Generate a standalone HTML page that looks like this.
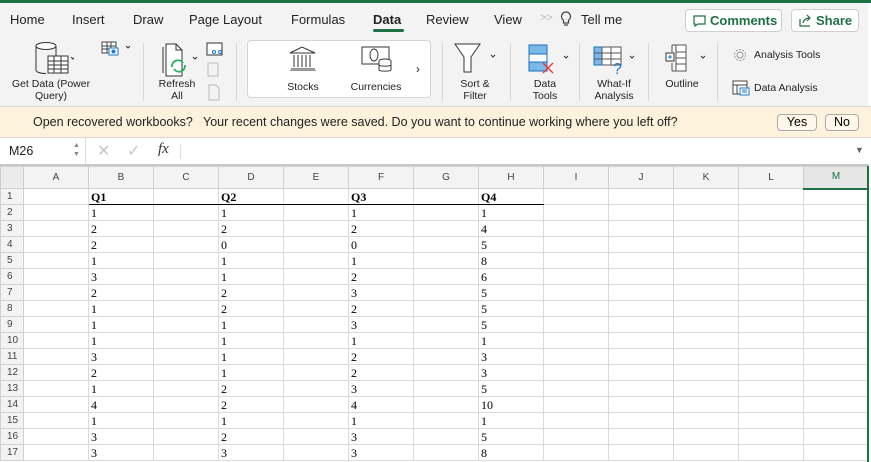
<!DOCTYPE html>
<html><head><meta charset="utf-8"><style>
*{box-sizing:border-box;margin:0;padding:0}
body{width:871px;height:462px;overflow:hidden;background:#fff;font-family:"Liberation Sans",sans-serif;position:relative}
.abs{position:absolute}
#top{left:0;top:0;width:871px;height:106px;background:#f3f3f3;border-top:3px solid #1e7145}
.tab{position:absolute;top:9px;font-size:13px;color:#222}
.lbl{position:absolute;font-size:10.5px;color:#222;text-align:center;line-height:12px}
.sep{position:absolute;top:40px;width:1px;height:58px;background:#d6d6d6}
.btn{position:absolute;top:6px;height:23px;border:1px solid #cfcfcf;border-radius:4px;background:#fff;color:#1e7145;font-weight:bold;font-size:13px;line-height:21px;padding-left:24px}
#banner{left:0;top:106px;width:871px;height:32px;background:#fdf3dc;border-top:1px solid #d8d8d8;border-bottom:1px solid #d8d8d8}
#fbar{left:0;top:138px;width:871px;height:28px;background:#fff;border-bottom:2px solid #c8c8c8}
table{position:absolute;left:0;top:166px;border-collapse:collapse;table-layout:fixed;width:868px}
td{height:16px;border:1px solid #dadada;font-family:"Liberation Serif",serif;font-size:12px;padding:0 2px;line-height:14px;overflow:hidden;white-space:nowrap;color:#000}
tr.h td{height:22px;background:#f3f3f3;font-family:"Liberation Sans",sans-serif;font-size:10px;color:#444;text-align:center;border-color:#d0d0d0}
td.r{background:#f3f3f3;font-family:"Liberation Sans",sans-serif;font-size:10px;color:#444;padding-left:6px;border-color:#d0d0d0}
tr.q td.d{font-weight:bold;border-bottom:1.5px solid #000}
</style></head><body>
<div id="top" class="abs">
 <div class="tab" style="left:10px">Home</div>
 <div class="tab" style="left:72px">Insert</div>
 <div class="tab" style="left:133px">Draw</div>
 <div class="tab" style="left:189px">Page Layout</div>
 <div class="tab" style="left:291px">Formulas</div>
 <div class="tab" style="left:373px;font-weight:bold">Data</div>
 <div class="abs" style="left:373px;top:26px;width:31px;height:3px;background:#1e7145;border-radius:2px"></div>
 <div class="tab" style="left:426px">Review</div>
 <div class="tab" style="left:494px">View</div>
 <div class="tab" style="left:540px;color:#bbb;font-size:11px">&gt;&gt;</div>
 <svg class="abs" style="left:560px;top:8px" width="12" height="16"><path d="M6 1a4.5 4.5 0 0 0-2.5 8.2V12h5V9.2A4.5 4.5 0 0 0 6 1zM4 14h4" fill="none" stroke="#444" stroke-width="1.2"/></svg>
 <div class="tab" style="left:581px">Tell me</div>
 <div class="btn" style="left:685px;width:97px">Comments<svg class="abs" style="left:7px;top:5px" width="13" height="12"><path d="M1 1h11v8H5l-3 2V9H1z" fill="none" stroke="#1e7145" stroke-width="1.2"/></svg></div>
 <div class="btn" style="left:791px;width:68px">Share<svg class="abs" style="left:7px;top:4px" width="13" height="13"><path d="M1 5v7h10M4 9c1-4 4-5 7-5M8 1l3 3-3 3" fill="none" stroke="#1e7145" stroke-width="1.2"/></svg></div>

 <svg class="abs" style="left:34px;top:38px" width="40" height="36"><ellipse cx="12" cy="5" rx="10" ry="3.5" fill="#fff" stroke="#333"/><path d="M2 5v24c0 2 4 3.5 10 3.5" fill="none" stroke="#333"/><path d="M22 5v10" stroke="#333"/><rect x="14" y="15" width="20" height="17" fill="#fff" stroke="#333"/><path d="M14 20h20M14 24h20M14 28h20M20 15v17M27 15v17" stroke="#333"/><path d="M37 16l2 2 2-2" fill="none" stroke="#333"/></svg>
 <div class="lbl" style="left:8px;top:75px;width:86px">Get Data (Power<br>Query)</div>
 <svg class="abs" style="left:101px;top:38px" width="32" height="18"><rect x="1" y="1" width="14" height="11" fill="#fff" stroke="#444"/><path d="M1 5h14M1 8h14M6 1v11M10 1v11" stroke="#444"/><rect x="8" y="7" width="9" height="7" fill="#fff" stroke="#1a7ad4"/><circle cx="12.5" cy="10.5" r="2" fill="#1a7ad4"/><path d="M25 5l2 2 2-2" fill="none" stroke="#333"/></svg>
 <div class="sep" style="left:143px"></div>
 <svg class="abs" style="left:160px;top:40px" width="40" height="34"><path d="M3 4v26M6 1h10l6 6v26H6z" fill="#fff" stroke="#333"/><path d="M16 1v6h6" fill="none" stroke="#333"/><path d="M12 24a6 6 0 0 1 11-4M25 22a6 6 0 0 1-11 4" fill="none" stroke="#2bb05a" stroke-width="1.8"/><path d="M33 14l2 2 2-2" fill="none" stroke="#333"/></svg>
 <div class="lbl" style="left:152px;top:75px;width:50px">Refresh<br>All</div>
 <svg class="abs" style="left:206px;top:38px" width="18" height="62"><rect x="1" y="2" width="15" height="12" fill="#fff" stroke="#333"/><circle cx="8" cy="11" r="1.5" fill="none" stroke="#1a7ad4"/><circle cx="14" cy="11" r="1.5" fill="none" stroke="#1a7ad4"/><rect x="2" y="22" width="10" height="13" fill="none" stroke="#bbb"/><path d="M3 44h7l3 3v12H3z" fill="none" stroke="#bbb"/></svg>
 <div class="sep" style="left:236px"></div>
 <div class="abs" style="left:247px;top:37px;width:184px;height:58px;background:#fff;border:1px solid #d4d4d4;border-radius:4px">
  <svg class="abs" style="left:40px;top:4px" width="30" height="26"><path d="M2 8L14 2l13 6zM2 8h25M3 24h24M2 26h26M6 10v12M10 10v12M14 10v12M18 10v12M22 10v12" fill="none" stroke="#333"/></svg>
  <div class="lbl" style="left:30px;top:40px;width:50px">Stocks</div>
  <svg class="abs" style="left:113px;top:4px" width="32" height="28"><rect x="1" y="2" width="27" height="17" fill="#fff" stroke="#333"/><ellipse cx="13" cy="10" rx="4" ry="6" fill="none" stroke="#333"/><ellipse cx="24" cy="16" rx="6" ry="2" fill="#fff" stroke="#333"/><path d="M18 16v9c0 1.5 12 1.5 12 0v-9M18 20c0 1.5 12 1.5 12 0" fill="#fff" stroke="#333"/></svg>
  <div class="lbl" style="left:98px;top:40px;width:60px">Currencies</div>
  <div class="lbl" style="left:168px;top:22px;font-size:12px">›</div>
 </div>
 <div class="sep" style="left:442px"></div>
 <svg class="abs" style="left:454px;top:40px" width="46" height="30"><path d="M1 1h25L17 14v15h-7V14z" fill="#fff" stroke="#333"/><path d="M37 12l2 2 2-2" fill="none" stroke="#333"/></svg>
 <div class="lbl" style="left:452px;top:75px;width:46px">Sort &amp;<br>Filter</div>
 <div class="sep" style="left:510px"></div>
 <svg class="abs" style="left:528px;top:41px" width="44" height="30"><rect x="1" y="1" width="18" height="9" fill="#7ab8ea" stroke="#1a6fc2"/><rect x="1" y="10" width="18" height="8" fill="#fff" stroke="#1a6fc2"/><rect x="1" y="18" width="18" height="9" fill="#7ab8ea" stroke="#1a6fc2"/><path d="M15 19l10 10M25 19L15 29" stroke="#e33" stroke-width="1.3"/><path d="M36 12l2 2 2-2" fill="none" stroke="#333"/></svg>
 <div class="lbl" style="left:524px;top:75px;width:42px">Data<br>Tools</div>
 <div class="sep" style="left:579px"></div>
 <svg class="abs" style="left:593px;top:43px" width="46" height="30"><rect x="1" y="1" width="27" height="18" fill="#fff" stroke="#555"/><rect x="1" y="1" width="8" height="18" fill="#7ab8ea" stroke="#1a6fc2"/><path d="M1 7h27M1 13h27M9 1v18M18 1v18" stroke="#555"/><text x="20" y="28" font-size="16" fill="#1a7ad4" font-family="Liberation Sans">?</text><path d="M37 10l2 2 2-2" fill="none" stroke="#333"/></svg>
 <div class="lbl" style="left:588px;top:75px;width:52px">What-If<br>Analysis</div>
 <div class="sep" style="left:648px"></div>
 <svg class="abs" style="left:664px;top:41px" width="46" height="30"><rect x="12" y="1" width="10" height="26" fill="#fff" stroke="#555"/><path d="M12 8h10M12 14h10M12 20h10M8 1h4M8 27h4M8 1v7M8 19v8" fill="none" stroke="#555"/><rect x="2" y="9" width="8" height="8" fill="#fff" stroke="#333"/><path d="M6 11v4M4 13h4" stroke="#1a7ad4"/><path d="M37 12l2 2 2-2" fill="none" stroke="#333"/></svg>
 <div class="lbl" style="left:660px;top:75px;width:44px">Outline</div>
 <div class="sep" style="left:717px"></div>
 <svg class="abs" style="left:733px;top:45px" width="14" height="14"><circle cx="7" cy="7" r="3" fill="none" stroke="#999"/><circle cx="7" cy="7" r="5.5" fill="none" stroke="#999" stroke-dasharray="2 1.5"/></svg>
 <div class="lbl" style="left:754px;top:46px;text-align:left">Analysis Tools</div>
 <svg class="abs" style="left:732px;top:77px" width="18" height="16"><rect x="1" y="1" width="14" height="13" fill="#fff" stroke="#444"/><path d="M1 5h14M5 5v9" stroke="#444"/><rect x="8" y="8" width="9" height="7" fill="#fff" stroke="#1a7ad4"/><path d="M10 10h5M10 12h5" stroke="#1a7ad4"/></svg>
 <div class="lbl" style="left:754px;top:79px;text-align:left">Data Analysis</div>
 <div class="abs" style="left:868px;top:0;width:3px;height:106px;background:#fff"></div>
</div>
<div id="banner" class="abs">
 <div class="abs" style="left:33px;top:8px;font-size:12.5px;color:#222;white-space:nowrap">Open recovered workbooks?&nbsp;&nbsp; Your recent changes were saved. Do you want to continue working where you left off?</div>
 <div class="abs" style="left:777px;top:7px;width:40px;height:17px;border:1px solid #aaa;border-radius:4px;background:#fff8ea;font-size:12.5px;text-align:center;line-height:15px">Yes</div>
 <div class="abs" style="left:825px;top:7px;width:34px;height:17px;border:1px solid #aaa;border-radius:4px;background:#fff8ea;font-size:12.5px;text-align:center;line-height:15px">No</div>
</div>
<div id="fbar" class="abs">
 <div class="abs" style="left:9px;top:6px;font-size:12.5px;color:#222">M26</div>
 <div class="abs" style="left:73px;top:3px;font-size:7px;color:#888;line-height:9px">▲<br>▼</div>
 <div class="abs" style="left:85px;top:0;width:1px;height:26px;background:#ddd"></div>
 <div class="abs" style="left:97px;top:3px;font-size:16px;color:#c8c8c8">✕</div>
 <div class="abs" style="left:127px;top:3px;font-size:16px;color:#c8c8c8">✓</div>
 <div class="abs" style="left:158px;top:3px;font-size:15px;font-style:italic;font-family:'Liberation Serif',serif;color:#333">fx</div>
 <div class="abs" style="left:180px;top:6px;width:1px;height:15px;background:#ddd"></div>
 <div class="abs" style="left:855px;top:7px;font-size:9px;color:#666">▼</div>
</div>
<table>
<colgroup><col style="width:23px"><col span="13" style="width:65px"></colgroup>
<tr class="h"><td style="background:#ebebeb"></td><td>A</td><td>B</td><td>C</td><td>D</td><td>E</td><td>F</td><td>G</td><td>H</td><td>I</td><td>J</td><td>K</td><td>L</td><td style="color:#1e7145;border-bottom:2px solid #1e7145;background:#e6e6e6">M</td></tr>
<tr class="q"><td class="r">1</td><td></td><td class="d">Q1</td><td class="d"></td><td class="d">Q2</td><td class="d"></td><td class="d">Q3</td><td class="d"></td><td class="d">Q4</td><td></td><td></td><td></td><td></td><td></td></tr>
<tr><td class="r">2</td><td></td><td>1</td><td></td><td>1</td><td></td><td>1</td><td></td><td>1</td><td></td><td></td><td></td><td></td><td></td></tr>
<tr><td class="r">3</td><td></td><td>2</td><td></td><td>2</td><td></td><td>2</td><td></td><td>4</td><td></td><td></td><td></td><td></td><td></td></tr>
<tr><td class="r">4</td><td></td><td>2</td><td></td><td>0</td><td></td><td>0</td><td></td><td>5</td><td></td><td></td><td></td><td></td><td></td></tr>
<tr><td class="r">5</td><td></td><td>1</td><td></td><td>1</td><td></td><td>1</td><td></td><td>8</td><td></td><td></td><td></td><td></td><td></td></tr>
<tr><td class="r">6</td><td></td><td>3</td><td></td><td>1</td><td></td><td>2</td><td></td><td>6</td><td></td><td></td><td></td><td></td><td></td></tr>
<tr><td class="r">7</td><td></td><td>2</td><td></td><td>2</td><td></td><td>3</td><td></td><td>5</td><td></td><td></td><td></td><td></td><td></td></tr>
<tr><td class="r">8</td><td></td><td>1</td><td></td><td>2</td><td></td><td>2</td><td></td><td>5</td><td></td><td></td><td></td><td></td><td></td></tr>
<tr><td class="r">9</td><td></td><td>1</td><td></td><td>1</td><td></td><td>3</td><td></td><td>5</td><td></td><td></td><td></td><td></td><td></td></tr>
<tr><td class="r">10</td><td></td><td>1</td><td></td><td>1</td><td></td><td>1</td><td></td><td>1</td><td></td><td></td><td></td><td></td><td></td></tr>
<tr><td class="r">11</td><td></td><td>3</td><td></td><td>1</td><td></td><td>2</td><td></td><td>3</td><td></td><td></td><td></td><td></td><td></td></tr>
<tr><td class="r">12</td><td></td><td>2</td><td></td><td>1</td><td></td><td>2</td><td></td><td>3</td><td></td><td></td><td></td><td></td><td></td></tr>
<tr><td class="r">13</td><td></td><td>1</td><td></td><td>2</td><td></td><td>3</td><td></td><td>5</td><td></td><td></td><td></td><td></td><td></td></tr>
<tr><td class="r">14</td><td></td><td>4</td><td></td><td>2</td><td></td><td>4</td><td></td><td>10</td><td></td><td></td><td></td><td></td><td></td></tr>
<tr><td class="r">15</td><td></td><td>1</td><td></td><td>1</td><td></td><td>1</td><td></td><td>1</td><td></td><td></td><td></td><td></td><td></td></tr>
<tr><td class="r">16</td><td></td><td>3</td><td></td><td>2</td><td></td><td>3</td><td></td><td>5</td><td></td><td></td><td></td><td></td><td></td></tr>
<tr><td class="r">17</td><td></td><td>3</td><td></td><td>3</td><td></td><td>3</td><td></td><td>8</td><td></td><td></td><td></td><td></td><td></td></tr>
</table>
<div class="abs" style="left:867px;top:166px;width:2px;height:296px;background:#1e7145"></div>
<div class="abs" style="left:869px;top:138px;width:2px;height:324px;background:#fff"></div>
</body></html>
